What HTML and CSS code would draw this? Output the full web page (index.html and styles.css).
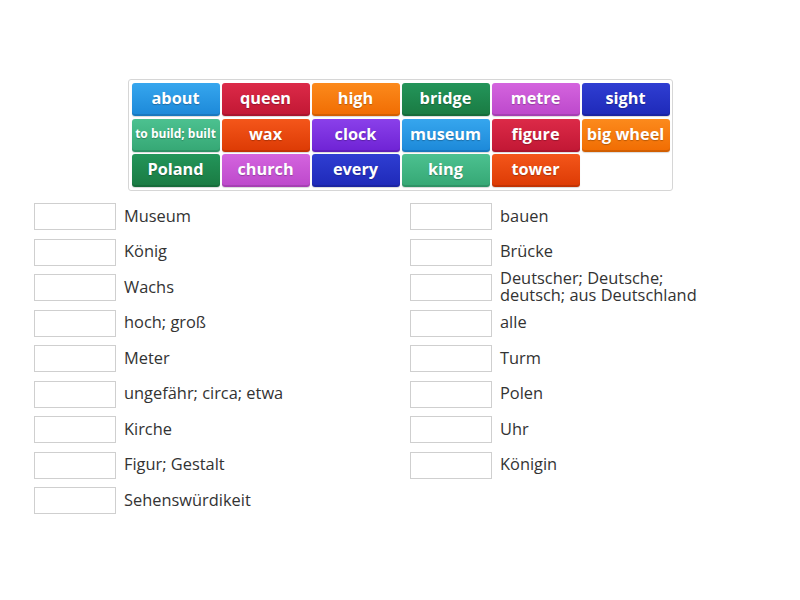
FILE: index.html
```html
<!DOCTYPE html>
<html lang="de">
<head>
<meta charset="utf-8">
<link rel="stylesheet" href="styles.css">
</head>
<body>
<div class="bank">
  <div class="tile c-blue">about</div>
  <div class="tile c-red">queen</div>
  <div class="tile c-orange">high</div>
  <div class="tile c-green">bridge</div>
  <div class="tile c-orchid">metre</div>
  <div class="tile c-indigo">sight</div>
  <div class="tile c-teal small">to build; built</div>
  <div class="tile c-flame">wax</div>
  <div class="tile c-purple">clock</div>
  <div class="tile c-blue">museum</div>
  <div class="tile c-red">figure</div>
  <div class="tile c-orange">big wheel</div>
  <div class="tile c-green">Poland</div>
  <div class="tile c-orchid">church</div>
  <div class="tile c-indigo">every</div>
  <div class="tile c-teal">king</div>
  <div class="tile c-flame">tower</div>
</div>
<div class="answers">
  <div class="col">
    <div class="row"><div class="slot"></div><div class="label">Museum</div></div>
    <div class="row"><div class="slot"></div><div class="label">König</div></div>
    <div class="row"><div class="slot"></div><div class="label">Wachs</div></div>
    <div class="row"><div class="slot"></div><div class="label">hoch; groß</div></div>
    <div class="row"><div class="slot"></div><div class="label">Meter</div></div>
    <div class="row"><div class="slot"></div><div class="label">ungefähr; circa; etwa</div></div>
    <div class="row"><div class="slot"></div><div class="label">Kirche</div></div>
    <div class="row"><div class="slot"></div><div class="label">Figur; Gestalt</div></div>
    <div class="row"><div class="slot"></div><div class="label">Sehenswürdikeit</div></div>
  </div>
  <div class="col">
    <div class="row"><div class="slot"></div><div class="label">bauen</div></div>
    <div class="row"><div class="slot"></div><div class="label">Brücke</div></div>
    <div class="row"><div class="slot"></div><div class="label">Deutscher; Deutsche;<br>deutsch; aus Deutschland</div></div>
    <div class="row"><div class="slot"></div><div class="label">alle</div></div>
    <div class="row"><div class="slot"></div><div class="label">Turm</div></div>
    <div class="row"><div class="slot"></div><div class="label">Polen</div></div>
    <div class="row"><div class="slot"></div><div class="label">Uhr</div></div>
    <div class="row"><div class="slot"></div><div class="label">Königin</div></div>
  </div>
</div>
</body>
</html>
```
FILE: styles.css
```css
html, body {
  margin: 0;
  padding: 0;
  background: #ffffff;
  font-family: "Open Sans", "Noto Sans", sans-serif;
}

.bank {
  box-sizing: border-box;
  width: 545px;
  margin: 79px auto 0;
  padding: 3px;
  border: 1px solid #d6d6d6;
  border-radius: 3px;
  display: grid;
  grid-template-columns: repeat(6, 88px);
  grid-auto-rows: 33px;
  column-gap: 2px;
  row-gap: 2.5px;
}

.tile {
  display: flex;
  align-items: center;
  justify-content: center;
  padding-bottom: 3px;
  box-sizing: border-box;
  border-radius: 3px;
  color: #ffffff;
  font-weight: 700;
  font-size: 16.3px;
  white-space: nowrap;
  text-shadow: 0 1px 1px rgba(0, 0, 0, 0.25);
  box-shadow: inset 0 -2px 0 rgba(0, 0, 0, 0.12), 0 1px 1px rgba(0, 0, 0, 0.15);
}

.tile.small { font-size: 12px; }

.c-blue   { background: linear-gradient(#36a6ee, #1c88d8); }
.c-red    { background: linear-gradient(#dc2a48, #c11734); }
.c-orange { background: linear-gradient(#fc8a1c, #f06c02); }
.c-green  { background: linear-gradient(#23955a, #1a7a42); }
.c-orchid { background: linear-gradient(#d464de, #bc48cb); }
.c-indigo { background: linear-gradient(#2f3ed2, #1e29b8); }
.c-teal   { background: linear-gradient(#4cc190, #35a774); }
.c-flame  { background: linear-gradient(#f4561a, #dc3a04); }
.c-purple { background: linear-gradient(#8a40ea, #6e22d4); }

.answers {
  display: grid;
  grid-template-columns: 376px 376px;
  padding-left: 34px;
  margin-top: 12px;
}

.col {
  display: flex;
  flex-direction: column;
  row-gap: 8.5px;
}

.row {
  display: flex;
  align-items: center;
  height: 27px;
}

.slot {
  box-sizing: border-box;
  width: 82px;
  height: 27px;
  flex: none;
  border: 1px solid #cfcfcf;
  background: #ffffff;
}

.label {
  margin-left: 8px;
  padding-bottom: 3px;
  font-size: 16.4px;
  line-height: 17px;
  color: #333333;
}
```
